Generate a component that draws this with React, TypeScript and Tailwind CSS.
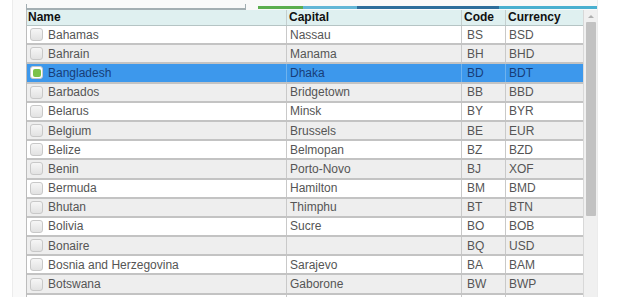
import { useState } from "react";

type Country = { name: string; capital: string; code: string; currency: string };

const countries: Country[] = [
  { name: "Bahamas", capital: "Nassau", code: "BS", currency: "BSD" },
  { name: "Bahrain", capital: "Manama", code: "BH", currency: "BHD" },
  { name: "Bangladesh", capital: "Dhaka", code: "BD", currency: "BDT" },
  { name: "Barbados", capital: "Bridgetown", code: "BB", currency: "BBD" },
  { name: "Belarus", capital: "Minsk", code: "BY", currency: "BYR" },
  { name: "Belgium", capital: "Brussels", code: "BE", currency: "EUR" },
  { name: "Belize", capital: "Belmopan", code: "BZ", currency: "BZD" },
  { name: "Benin", capital: "Porto-Novo", code: "BJ", currency: "XOF" },
  { name: "Bermuda", capital: "Hamilton", code: "BM", currency: "BMD" },
  { name: "Bhutan", capital: "Thimphu", code: "BT", currency: "BTN" },
  { name: "Bolivia", capital: "Sucre", code: "BO", currency: "BOB" },
  { name: "Bonaire", capital: "", code: "BQ", currency: "USD" },
  { name: "Bosnia and Herzegovina", capital: "Sarajevo", code: "BA", currency: "BAM" },
  { name: "Botswana", capital: "Gaborone", code: "BW", currency: "BWP" },
];

const Check = ({ on }: { on: boolean }) => (
  <span
    className={
      on
        ? "w-[13px] h-[13px] rounded-[3px] border border-[#c8c8c8] bg-white flex items-center justify-center shrink-0"
        : "w-[13px] h-[13px] rounded-[3px] border border-[#c8c8c8] bg-gradient-to-b from-[#f6f6f6] to-[#e2e2e2] shrink-0"
    }
  >
    {on ? <span className="w-[8px] h-[8px] rounded-[2px] bg-[#7cc24a]" /> : null}
  </span>
);

export default function App() {
  const [selected, setSelected] = useState(2);

  return (
    <div
      className="w-[625px] h-[300px] bg-white overflow-hidden flex"
      style={{ fontFamily: '"Liberation Sans", Arial, sans-serif' }}
    >
      <div className="w-[12px] shrink-0" />
      {/* panel */}
      <div className="w-[586px] h-[297px] bg-[#f9f9f9] border-l border-[#ececec] border-r border-r-[#ececec] pl-[13px] flex flex-col">
        {/* top strip */}
        <div className="h-[10px] flex items-end shrink-0">
          <div className="w-[220px] h-[6px] border-l border-b-2 border-[#a3aeb2]" />
          <div className="w-[1px] h-[4px] bg-[#a3aeb2] self-end mb-[2px] ml-[-1px]" />
          <div className="w-[12px]" />
          <div className="flex h-[3px] mb-[1px]">
            <div className="w-[45px] bg-[#5cae4e]" />
            <div className="w-[54px] bg-[#62b6d6]" />
            <div className="w-[142px] bg-[#2d6d9b]" />
            <div className="w-[98px] bg-[#4ab0d0]" />
          </div>
        </div>
        <div className="flex flex-1 min-h-0">
          {/* table */}
          <div className="w-[558px] flex flex-col overflow-hidden border-l border-[#bcbcbc]">
            <div className="h-[16px] shrink-0 flex bg-[#dff0f0] border-b border-[#b5c4c4] text-[12px] font-bold text-[#111] leading-[15px]">
              <div className="w-[260px] pl-[1px] border-r border-[#c4cfcf]">Name</div>
              <div className="w-[175px] pl-[2px] border-r border-[#c4cfcf]">Capital</div>
              <div className="w-[44px] pl-[2px] border-r border-[#c4cfcf]">Code</div>
              <div className="flex-1 pl-[2px]">Currency</div>
            </div>
            {countries.map((c, i) => {
              const sel = i === selected;
              const rowCls = sel
                ? "bg-[#3d98ec] text-[#173d78]"
                : i % 2 === 1
                ? "bg-[#eeeeee] text-[#555]"
                : "bg-white text-[#555]";
              const cellBorder = sel ? "border-r border-[#6fb3ee]" : "border-r border-[#c9c9c9]";
              return (
                <div
                  key={c.name}
                  onClick={() => setSelected(i)}
                  className={`h-[19.2px] shrink-0 flex items-center text-[12px] border-b-2 border-[#c3c3c3] cursor-pointer ${rowCls}`}
                >
                  <div className={`w-[260px] h-full flex items-center gap-[5px] pl-[3px] ${cellBorder}`}>
                    <Check on={sel} />
                    <span>{c.name}</span>
                  </div>
                  <div className={`w-[175px] h-full flex items-center pl-[3px] ${cellBorder}`}>{c.capital}</div>
                  <div className={`w-[44px] h-full flex items-center pl-[5px] ${cellBorder}`}>{c.code}</div>
                  <div className="flex-1 h-full flex items-center pl-[3px]">{c.currency}</div>
                </div>
              );
            })}
            {/* next row, scrolled out of view */}
            <div className="h-[19px] shrink-0 flex bg-white">
              <div className="w-[260px] border-r border-[#c9c9c9]" />
              <div className="w-[175px] border-r border-[#c9c9c9]" />
              <div className="w-[44px] border-r border-[#c9c9c9]" />
              <div className="flex-1" />
            </div>
          </div>
          {/* scrollbar */}
          <div className="w-[14px] bg-[#f0f0f0] border-l border-[#d8d8d8] flex flex-col items-center">
            <div className="h-[12px] flex items-center justify-center">
              <span className="w-0 h-0 border-l-[3px] border-r-[3px] border-b-[3px] border-l-transparent border-r-transparent border-b-[#b0b0b0]" />
            </div>
            <div className="w-[10px] h-[194px] bg-[#c2c2c2] rounded-[1px]" />
          </div>
        </div>
      </div>
    </div>
  );
}
